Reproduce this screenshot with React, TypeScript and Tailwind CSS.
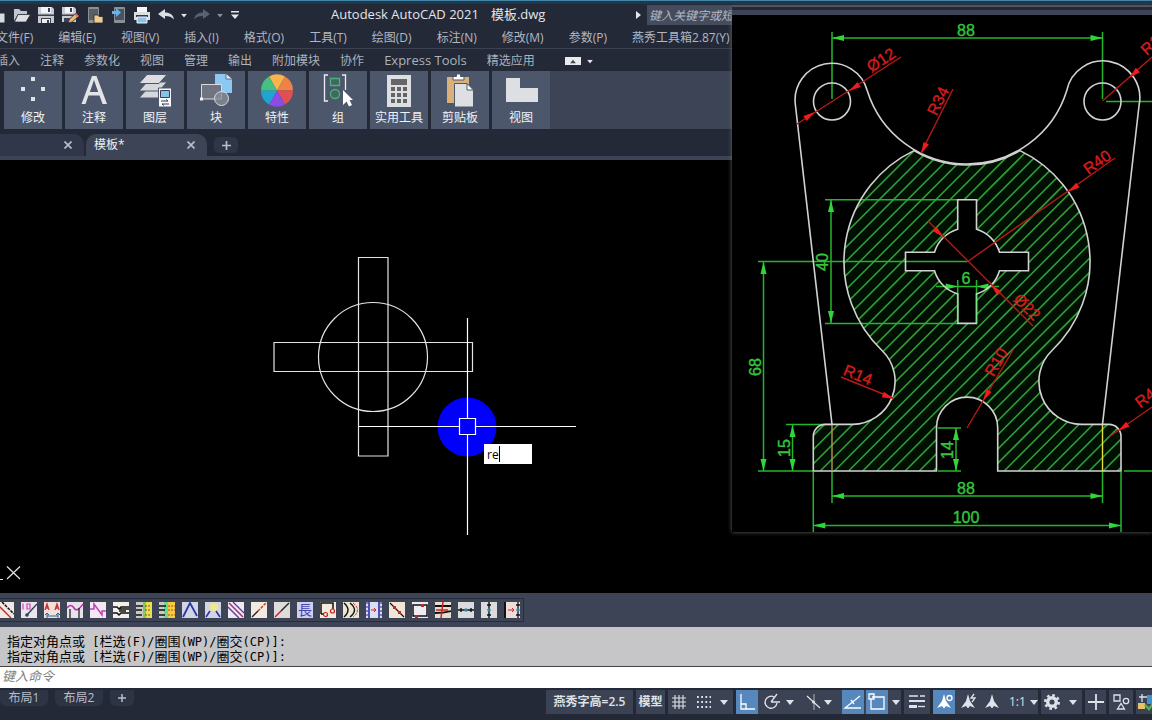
import React, { useState } from "react";

const FONT = "font-['Open_Sans','Noto_Sans_CJK_SC',sans-serif]";

const menus = [
    "文件(F)",
    "编辑(E)",
    "视图(V)",
    "插入(I)",
    "格式(O)",
    "工具(T)",
    "绘图(D)",
    "标注(N)",
    "修改(M)",
    "参数(P)",
    "燕秀工具箱2.87(Y)",
];

const ribbonTabs = [
    "插入",
    "注释",
    "参数化",
    "视图",
    "管理",
    "输出",
    "附加模块",
    "协作",
    "Express Tools",
    "精选应用",
];

const Caret = ({ className = "" }) => (
    <svg viewBox="0 0 8 5" className={`h-[5px] w-2 shrink-0 ${className}`} fill="currentColor">
        <path d="M0 0h8L4 5z" />
    </svg>
);

/* quick access icons, 18x18 */
const quickIcons = [
    {
        label: "新建",
        art: <path d="M1 2h9l6 5v10H1zM10 2v5h6" fill="#d9dbe0" stroke="#222836" />,
    },
    {
        label: "打开",
        art: (
            <>
                <path d="M1 15V3h5l2 2h6v3H5z" fill="#c4c6cb" />
                <path d="M5 8.500h12.500L13 16H1.500z" fill="#dedfe3" stroke="#222836" strokeWidth=".7" />
            </>
        ),
    },
    {
        label: "保存",
        art: (
            <>
                <path d="M1 1h14l2 2v14H1z" fill="#c9cbd0" />
                <path d="M4 1h10v6H4z" fill="#f3f4f6" />
                <path d="M11 2h2v4h-2zM1 8.500h16v1.500H1zM4 12h10v5H4z" fill="#3a4151" />
                <path d="M5 13h8v4H5z" fill="#eceef1" />
                <path d="M10 14h2v3h-2z" fill="#3a4151" />
            </>
        ),
    },
    {
        label: "另存为",
        art: (
            <>
                <path d="M1 1h12l2 2v13H1z" fill="#c9cbd0" />
                <path d="M4 1h8v6H4z" fill="#f3f4f6" />
                <path d="M9 2h2v4H9zM1 8.500h13v1.500H1zM3 12h7v4H3z" fill="#3a4151" />
                <path d="M15 7l3 3-7 6-4 1 1.500-4z" fill="#e8b873" stroke="#222836" strokeWidth=".8" />
                <path d="M15 7l3 3-1.500 1.500-3-3z" fill="#d66" />
            </>
        ),
    },
    {
        label: "从移动设备打开",
        art: (
            <>
                <rect x="3" y="1" width="11" height="16" rx="1" fill="#8d8f94" />
                <path d="M4 3h9v11H4z" fill="#5b5e65" />
                <path d="M9 17V9h4l1 1.500h4v6.500z" fill="#f0cd8c" stroke="#222836" strokeWidth=".8" />
            </>
        ),
    },
    {
        label: "保存到移动设备",
        art: (
            <>
                <rect x="5" y="1" width="11" height="16" rx="1" fill="#8d8f94" />
                <path d="M6 3h9v11H6z" fill="#4b515f" />
                <path d="M3 5h4V2l5 4.500L7 11V8H3z" fill="#62b5e8" />
            </>
        ),
    },
    {
        label: "打印",
        art: (
            <>
                <path d="M4 1h10v5H4z" fill="#f4f5f7" />
                <path d="M1 6h16v8H1z" fill="#dcdee2" />
                <path d="M3 9h12v2H3z" fill="#303746" />
                <path d="M4 11h10v6H4z" fill="#8cc4e8" stroke="#eef" />
            </>
        ),
    },
];

const ribbonPanels = [
    {
        label: "修改",
        art: (
            <path
                d="M16 4h4v4h-4zM6 14h4v4H6zM26 14h4v4h-4zM16 24h4v4h-4z"
                fill="#dfe3ea"
            />
        ),
    },
    {
        label: "注释",
        art: (
            <path
                fillRule="evenodd"
                d="M5.500 31L16 3h4.500L31 31h-4.500l-3-8.500h-11L9.500 31zM13.800 19h8.400L18 7z"
                fill="#e2e4e8"
            />
        ),
    },
    {
        label: "图层",
        art: (
            <>
                <path d="M10 16h20l-8 9H2z" fill="#d5d7dc" stroke="#4d576c" />
                <path d="M10 9h20l-8 9H2z" fill="#d5d7dc" stroke="#4d576c" />
                <path d="M10 1.500h20l-8 9H2z" fill="#dcdee2" stroke="#4d576c" />
                <path d="M21.500 15h13v19h-13z" fill="#f7f8fa" stroke="#4d576c" />
                <path d="M23.500 17.500h9v7h-9z" fill="#86c3ec" stroke="#364052" />
                <path d="M24 28h7m-2-1.500l2 1.500M32 31h-7m2 1.500L25 31" stroke="#364052" fill="none" />
            </>
        ),
    },
    {
        label: "块",
        art: (
            <>
                <path d="M17 1h11l6 5v14H17z" fill="#8cc8f2" />
                <path d="M28 1v5h6" fill="#d7ecfb" stroke="#4d576c" strokeWidth=".8" />
                <path d="M3.500 11.500h20V26h-20z" fill="#6f7480" stroke="#d8dbe0" />
                <circle cx="23.500" cy="25.500" r="7" fill="#8b8f98" fillOpacity=".75" stroke="#d8dbe0" />
                <path d="M2 24.500h3v3H2z" fill="#f2f3f5" />
            </>
        ),
    },
    {
        label: "特性",
        art: (
            <>
                <path d="M18 17.500L10 3.600A16 16 0 0 1 26 3.600z" fill="#f9b44c" />
                <path d="M18 17.500L26 3.600A16 16 0 0 1 34 17.500z" fill="#ee8247" />
                <path d="M18 17.500h16A16 16 0 0 1 26 31.400z" fill="#e14f50" />
                <path d="M18 17.500l8 13.900A16 16 0 0 1 10 31.400z" fill="#8b4be6" />
                <path d="M18 17.500l-8 13.900A16 16 0 0 1 2 17.500z" fill="#1fa5d3" />
                <path d="M18 17.500H2A16 16 0 0 1 10 3.600z" fill="#43c082" />
            </>
        ),
    },
    {
        label: "组",
        art: (
            <>
                <path d="M8 2H4.500v26H8M22 2h3.500v15" fill="none" stroke="#eceef2" strokeWidth="1.300" />
                <path d="M10.500 5.500h9v7h-9z" fill="#3d6a5d" stroke="#4fae7d" strokeWidth="1.300" />
                <circle cx="15" cy="21" r="4.500" fill="#3d6a5d" stroke="#4fae7d" strokeWidth="1.300" />
                <path d="M23 17v15l3.500-3.500 2.500 5 3-1.500-2.500-5H33z" fill="#fff" />
            </>
        ),
    },
    {
        label: "实用工具",
        art: (
            <>
                <path d="M6 2h24v32H6z" fill="#dedfe3" />
                <path d="M10 6h16v6H10z" fill="#666" />
                <path
                    d="M10 14h4v4h-4zM16 14h4v4h-4zM22 14h4v4h-4zM10 20h4v4h-4zM16 20h4v4h-4zM22 20h4v4h-4zM10 26h4v4h-4zM16 26h4v4h-4zM22 26h4v4h-4z"
                    fill="#626468"
                />
            </>
        ),
    },
    {
        label: "剪贴板",
        art: (
            <>
                <path d="M5 4h22v26H5z" fill="#d8b07a" />
                <path d="M11 7V3.500h3.500V1h4v2.500H22V7z" fill="#fff" stroke="#4d576c" />
                <path d="M12.500 10.500H25l6.500 6.500v17h-19z" fill="#dedfe3" stroke="#4d576c" />
                <path d="M25 10.500V17h6.500z" fill="#fff" stroke="#4d576c" />
            </>
        ),
    },
    {
        label: "视图",
        art: <path d="M3 5h14v10h18v14H3z" fill="#dedfe3" />,
    },
];

/* plugin toolbar, 16x16 each */
const toolIcons = [
    { bg: "#f1e9e2", art: <><path d="M1 4l12 12" stroke="#c22" strokeWidth="1.300" /><path d="M4 0l12 12" stroke="#111" strokeDasharray="3 1" strokeWidth="1.500" /></> },
    { bg: "#e9e4ee", art: <><path d="M2 1.500v6M6 2h3v5H6z" stroke="#d346b4" strokeWidth="1.200" /><path d="M16 2L5 14" stroke="#345" strokeWidth="1.500" /><circle cx="6" cy="13" r="1.800" fill="#345" /></> },
    { bg: "#f3e0dc", art: <><path d="M1 8l2-6 2 6M2 6h2M11 8l2-6 2 6M12 6h2" stroke="#c33" strokeWidth="1.300" /><path d="M3 16v-5m11 5v-5M3 14h11M1 13l2-2 2 2m7 0l2-2 2 2" stroke="#268" /></> },
    { bg: "#e8e2ea", art: <><path d="M0 6q4-5 7 0t9-4" stroke="#c02bb0" strokeWidth="1.500" /><path d="M3 16V7m9 9V6" stroke="#222" strokeWidth="1.300" /></> },
    { bg: "#f4e9f2", art: <path d="M0 7h4V2l8 11V9h4" stroke="#c040b8" strokeWidth="1.500" /> },
    { bg: "#f2f0e9", art: <path d="M0 5h4l2 2 2-2h8M0 11h4l2 2 2-2h8M6 7h10M6 9h7" stroke="#111" strokeWidth="1.500" /> },
    { bg: "#e7e04f", art: <><path d="M0 0h7v16H0z" fill="#c9c9c4" stroke="none" /><path d="M7 0h3v16H7z" fill="#7cc95e" stroke="none" /><path d="M0 4h7M0 8h6M0 13h6" stroke="#111" strokeWidth="1.500" /><path d="M9 4h6M9 8h6M9 13h6" stroke="#a42" strokeDasharray="2 1" /></> },
    { bg: "#f3cf3e", art: <><path d="M0 0h5v16H0z" fill="#c9c9c4" stroke="none" /><path d="M5 0h4v16H5z" fill="#6fd39c" stroke="none" /><path d="M0 4h7M0 8h6M0 13h6" stroke="#111" strokeWidth="1.500" /><path d="M9 4h7M9 8h7M9 13h7" stroke="#b42" strokeDasharray="2 1" /></> },
    { bg: "#d2d6e2", art: <path d="M1 15L8 1l7 13" stroke="#2b35b0" strokeWidth="1.800" /> },
    { bg: "#d2d6e2", art: <><circle cx="9" cy="5" r="4" fill="#efe88a" stroke="none" /><path d="M1 15l4-6m6 0l4 6" stroke="#2b35b0" strokeWidth="1.600" /></> },
    { bg: "#efe9f0", art: <><path d="M0 5l11 11M5 0l11 11" stroke="#5a3fa8" strokeWidth="1.400" /><path d="M1 1l14 14" stroke="#b0306f" strokeWidth="1.600" /></> },
    { bg: "#f3ebe2", art: <><path d="M1 15L7 9" stroke="#222" strokeWidth="1.500" /><path d="M7 9l8-8" stroke="#c53a22" strokeWidth="1.400" strokeDasharray="3 1" /></> },
    { bg: "#dedcdb", art: <><path d="M7 9l8-8" stroke="#222" strokeWidth="1.500" /><path d="M1 15L7 9" stroke="#b22" strokeWidth="1.500" /></> },
    { bg: "#cfd0ef", art: null, glyph: "長" },
    { bg: "#f3ebdd", art: <><path d="M1 12V1h12v6M1 12h3" stroke="#111" strokeWidth="1.500" /><circle cx="5.500" cy="12.500" r="2" stroke="#c22" strokeWidth="1.200" /><circle cx="12.500" cy="9" r="2" stroke="#c22" strokeWidth="1.200" /></> },
    { bg: "#ece6d4", art: <><path d="M1 1q8 7 0 14M7 1q9 7 0 14" stroke="#111" strokeWidth="1.400" /><path d="M10 1q9 7 0 14" stroke="#b33" strokeDasharray="3 1" /></> },
    { bg: "#dcdcf3", art: <><path d="M3 0v16M13 0v16" stroke="#1e23a0" strokeWidth="1.500" /><path d="M1 0v16M15 0v16" stroke="#1e23a0" strokeDasharray="2 2" /><path d="M5 8h5M8 6l2 2-2 2" stroke="#c22" /></> },
    { bg: "#f1e6d6", art: <><path d="M1 1l14 14" stroke="#111" strokeWidth="1.300" /><path d="M4 4h3v3H4zM9 9h3v3H9z" fill="#c22" stroke="none" /></> },
    { bg: "#ececf2", art: <><path d="M1 3h14v11H1z" stroke="#111" strokeWidth="1.500" /><path d="M9 2h3v3H9zM3 13h3v3H3z" fill="#c22" stroke="none" /></> },
    { bg: "#e3dccf", art: <><path d="M0 4h16M0 11q8 0 16-2" stroke="#111" strokeWidth="1.800" /><path d="M8 0L6 16M1 8h12" stroke="#c22" strokeWidth="1.500" /></> },
    { bg: "#d9dbdd", art: <><path d="M0 8h16M3 6v4M13 6v4" stroke="#111" strokeWidth="1.400" /><circle cx="8" cy="8" r="1.800" fill="#38a" stroke="none" /></> },
    { bg: "#d9dbdd", art: <><path d="M8 0v16M6 3h4M6 13h4" stroke="#111" strokeWidth="1.400" /><circle cx="8" cy="8" r="1.800" fill="#38a" stroke="none" /></> },
    { bg: "#ecdcda", art: <><path d="M1 0v16" stroke="#111" strokeWidth="2" /><path d="M14 0v16M12 3h4M12 13h4" stroke="#111" strokeWidth="1.300" /><path d="M4 8h6M8 6l2 2-2 2" stroke="#c22" /><circle cx="14" cy="8" r="1.800" fill="#38a" stroke="none" /></> },
];

/* ---------- part drawing ---------- */

const BODY =
    "M914 150.600A104.500 104.500 0 0 0 1020 150.600A123 123 0 0 1 1052 350.500A43 43 0 0 0 1081.500 424.400H1109A12 12 0 0 1 1121 436.400V471H997.700V427.700A30.600 30.600 0 0 0 936.500 427.700V471H813.300V436.400A12 12 0 0 1 825.300 424.400H852.500A43 43 0 0 0 882 350.500A123 123 0 0 1 914 150.600Z";
const HOLE =
    "M957.700 229.200V199.700H976.500V229.200A34 34 0 0 1 999.500 252.300H1028.500V270.700H999.500A34 34 0 0 1 976.500 293.900V323.400H957.700V293.900A34 34 0 0 1 934.500 270.700H905.500V252.300H934.500A34 34 0 0 1 957.700 229.200Z";

const Tip = ({ x, y, a }) => (
    <path d="M0 0L-12 -3V3Z" transform={`translate(${x} ${y}) rotate(${a})`} stroke="none" />
);

const Dim = ({ x, y, a = 0, anchor = "middle", children }) => (
    <text
        transform={`translate(${x} ${y}) rotate(${a})`}
        textAnchor={anchor as any}
        dominantBaseline="central"
        fontSize="16"
        strokeWidth=".4"
    >
        {children}
    </text>
);

const PartDrawing = () => {
    const hatch = Array.from({ length: 54 }, (_, i) => 965.75 + i * 14.15);
    return (
        <svg
            viewBox="732 15 420 517"
            className="block h-[517px] w-[420px] bg-black font-['Liberation_Sans',sans-serif]"
            fill="none"
        >
            <clipPath id="body">
                <path clipRule="evenodd" d={BODY + HOLE} />
            </clipPath>
            <g clipPath="url(#body)" stroke="#2f9c38" strokeWidth="1.600">
                <path d="M732 15h420v517H732z" fill="#000f02" stroke="none" />
                {hatch.map((s) => (
                    <path key={s} d={`M${s - 471} 471L${s - 140} 140`} />
                ))}
            </g>

            <g stroke="#22b62c" strokeWidth="1.500">
                <path d="M832 38H1102.500M832 32V99M1102.500 32V99M1106 101.500H1152" />
                <path d="M831 200V323M825 199.700H957M825 323.400H957" />
                <path d="M763.500 262V471M758 261.500H967M758 471H813M1124 471H1152" />
                <path d="M792.500 425V471M786 424.400H832" />
                <path d="M956 428V471M938 428H961M938 471H961" />
                <path d="M832 496H1102.500M832 471V503M1102.500 471V503" />
                <path d="M813.300 525.500H1121M813.300 472V532M1121 472V532" />
                <path d="M936 286.500H999M957.700 280V323M976.500 280V323" />
            </g>
            <g fill="#2fd83a">
                <Tip x={832} y={38} a={180} />
                <Tip x={1102.5} y={38} a={0} />
                <Tip x={831} y={200} a={-90} />
                <Tip x={831} y={323} a={90} />
                <Tip x={763.5} y={262} a={-90} />
                <Tip x={763.5} y={471} a={90} />
                <Tip x={792.5} y={425} a={-90} />
                <Tip x={792.5} y={471} a={90} />
                <Tip x={956} y={428} a={-90} />
                <Tip x={956} y={471} a={90} />
                <Tip x={832} y={496} a={180} />
                <Tip x={1102.5} y={496} a={0} />
                <Tip x={813.3} y={525.5} a={180} />
                <Tip x={1121} y={525.5} a={0} />
                <Tip x={957.7} y={286.5} a={0} />
                <Tip x={976.5} y={286.5} a={180} />
            </g>
            <g fill="#35c43e" stroke="#35c43e">
                <Dim x={966} y={30}>88</Dim>
                <Dim x={822} y={262} a={-90}>40</Dim>
                <Dim x={755} y={367} a={-90}>68</Dim>
                <Dim x={784} y={448} a={-90}>15</Dim>
                <Dim x={947} y={450} a={-90}>14</Dim>
                <Dim x={966} y={278}>6</Dim>
                <Dim x={966} y={488}>88</Dim>
                <Dim x={966} y={517}>100</Dim>
            </g>

            <g stroke="#d2d2d2" strokeWidth="1.600">
                <path d={BODY} />
                <path d={HOLE} />
                <path d="M832 424.400L795.400 105A36.700 36.700 0 0 1 867.200 90.500A104.500 104.500 0 0 0 1066.800 90.500A36.700 36.700 0 0 1 1139.100 105L1102.500 424.400" />
                <circle cx="832" cy="101.500" r="18.500" />
                <circle cx="1102.500" cy="101.500" r="18.500" />
            </g>
            <path d="M957.700 295V323M976.500 295V323" stroke="#7fe07f" />
            <path d="M832 425V471" stroke="#b59a4a" strokeWidth="1.400" />
            <path d="M1102.500 425V471" stroke="#e2e03a" strokeWidth="1.400" />

            <g stroke="#b81818" strokeWidth="1.400">
                <path d="M797 124L901 57M953 89L921 153M967 262L1115 158M928 221L1033 326" />
                <path d="M967 428L1013 350M841 377L893 398M1109 437L1152 407M1102.500 101L1152 57" />
            </g>
            <g fill="#f01c1c">
                <Tip x={849} y={91} a={147} />
                <Tip x={815} y={112} a={-33} />
                <Tip x={921} y={154} a={116} />
                <Tip x={1068} y={192} a={145} />
                <Tip x={943} y={237} a={45} />
                <Tip x={991} y={285} a={225} />
                <Tip x={983} y={401} a={120} />
                <Tip x={894} y={399} a={22} />
                <Tip x={1118} y={431} a={145} />
                <Tip x={1129} y={78} a={138} />
            </g>
            <g fill="#d41c1c" stroke="#d41c1c">
                <Dim x={881} y={60} a={-33}>Ø12</Dim>
                <Dim x={938} y={101} a={-64}>R34</Dim>
                <Dim x={1097} y={162} a={-35}>R40</Dim>
                <Dim x={1027} y={307} a={45}>Ø22</Dim>
                <Dim x={996} y={362} a={-60}>R10</Dim>
                <Dim x={858} y={375} a={22}>R14</Dim>
                <Dim x={1137} y={404} a={-37} anchor="start">R4</Dim>
                <Dim x={1143} y={52} a={-42} anchor="start">R12</Dim>
            </g>
        </svg>
    );
};

/* ---------- chrome ---------- */

const TitleBar = () => (
    <header className="flex h-[24px] items-center overflow-hidden pb-[2px] text-[13px] text-[#e3e5ea]">
        <div className="-ml-[11px] flex items-center gap-[6px]">
            {quickIcons.map((q) => (
                <button key={q.label} aria-label={q.label} className="size-[18px]">
                    <svg viewBox="0 0 18 18" className="size-[18px]">
                        {q.art}
                    </svg>
                </button>
            ))}
        </div>
        <div className="ml-[6px] flex items-center">
            <button aria-label="放弃" className="size-[18px]">
                <svg viewBox="0 0 18 18" fill="#dcdee3">
                    <path d="M1 8l7-5v3.500c5 0 8 2 9 7-2-2.500-5-3.500-9-3.500v3z" />
                </svg>
            </button>
            <Caret className="ml-[5px] scale-75" />
            <button aria-label="重做" className="ml-[5px] size-[18px]">
                <svg viewBox="0 0 18 18" fill="#5b616f">
                    <path d="M17 8l-7-5v3.500c-5 0-8 2-9 7 2-2.500 5-3.500 9-3.500v3z" />
                </svg>
            </button>
            <Caret className="ml-[5px] scale-75 text-[#8b909c]" />
            <button aria-label="自定义快速访问工具栏" className="ml-[7px]">
                <svg viewBox="0 0 8 8" className="size-2" fill="currentColor">
                    <path d="M0 0h8v1.500H0zM0 3.500h8L4 8z" />
                </svg>
            </button>
        </div>
        <h1 className="ml-[92px] flex gap-3 whitespace-nowrap">
            <span>Autodesk AutoCAD 2021</span>
            <span>模板.dwg</span>
        </h1>
        <svg viewBox="0 0 5 8" className="ml-auto h-2 w-[5px]" fill="currentColor">
            <path d="M0 0l5 4-5 4z" />
        </svg>
        <input
            aria-label="搜索"
            placeholder="键入关键字或短语"
            className="ml-[6px] h-5 w-[505px] bg-[#454c5e] px-[2px] text-xs italic outline-none placeholder:text-[#b4b9c4]"
        />
    </header>
);

const MenuBar = () => (
    <nav className="flex h-[21px] items-center gap-[25px] overflow-hidden border-b border-[#3b4150] text-xs whitespace-nowrap text-[#b3b7c0]">
        {menus.map((m, i) => (
            <a key={m} href="#" className={i === 0 ? "-ml-1" : ""}>
                {m}
            </a>
        ))}
    </nav>
);

const RibbonTabs = () => (
    <nav className="flex h-[22px] items-center gap-5 overflow-hidden pt-[2px] text-xs whitespace-nowrap text-[#adb2bc]">
        {ribbonTabs.map((t, i) => (
            <a key={t} href="#" className={i === 0 ? "-ml-1" : t === "Express Tools" ? "text-[13px]" : ""}>
                {t}
            </a>
        ))}
        <div className="ml-[10px] flex items-center gap-[5px] text-[#e3e5ea]">
            <button aria-label="最小化面板" className="flex h-2 w-4 items-center justify-center bg-[#e8eaee] text-[#444]">
                <Caret className="rotate-180 scale-75" />
            </button>
            <Caret className="scale-75" />
        </div>
    </nav>
);

const Ribbon = () => (
    <section className="flex h-[58px] bg-[#3d4455]">
        <div className="flex gap-[3px] bg-[#232937] pl-1">
            {ribbonPanels.map((p) => (
                <button
                    key={p.label}
                    className="flex w-[58px] flex-col items-center bg-[#4d576c] pt-[2px] text-xs text-[#f0f2f5]"
                >
                    <svg viewBox="0 0 36 36" className="size-9">
                        {p.art}
                    </svg>
                    <span className="leading-[18px] whitespace-nowrap">{p.label}</span>
                </button>
            ))}
        </div>
    </section>
);

const Close = () => (
    <svg viewBox="0 0 8 8" className="size-2" stroke="#b9bdc6" strokeWidth="1.700">
        <path d="M.5.5l7 7M7.500.5l-7 7" />
    </svg>
);

const FileTabs = () => (
    <div className="flex h-[31px] items-end border-b-4 border-[#3d4455] bg-[#232937] text-xs text-[#eceef2]">
        <div className="flex h-[22px] w-[84px] items-center justify-end rounded-tr-[10px] bg-[#30374a] pr-3">
            <button aria-label="关闭"><Close /></button>
        </div>
        <div className="ml-[2px] flex h-[22px] w-[121px] items-center justify-between rounded-t-[10px] bg-[#3d4455] pr-3 pl-2">
            <span>模板*</span>
            <button aria-label="关闭 模板"><Close /></button>
        </div>
        <button
            aria-label="新图形"
            className="mb-[3px] ml-[7px] flex h-4 w-6 items-center justify-center rounded-[5px] bg-[#2f3646]"
        >
            <svg viewBox="0 0 8 8" className="size-[9px]" stroke="#b9bdc6" strokeWidth="1.500">
                <path d="M4 0v8M0 4h8" />
            </svg>
        </button>
    </div>
);

const ModelSpace = () => {
    const [cmd, setCmd] = useState("re");
    return (
        <main className="relative min-h-[433px] flex-1 overflow-hidden bg-black">
            <svg
                viewBox="0 160 732 433"
                className="block h-[433px] w-[732px]"
                fill="none"
                stroke="#e4e4e4"
                strokeWidth="1.200"
            >
                <circle cx="467" cy="427" r="29.500" fill="#0000fb" stroke="none" />
                <path d="M358.500 257.500H388V456H358.500zM274 342.500H472.500V371.500H274z" />
                <circle cx="373" cy="357" r="54.500" />
                <path d="M358.500 426.500H459M475.500 426.500H576M467.500 318V418.500M467.500 434.500V535" stroke="#fff" />
                <path d="M459.500 418.500H475.500V434.500H459.500z" stroke="#fff" />
                <path d="M7 566.500L20 579M20 566.500L7 579M0 579.500H3" />
            </svg>
            <div className="absolute top-[284px] left-[484px] flex h-5 w-12 items-center bg-white">
                <input
                    aria-label="动态输入"
                    value={cmd}
                    onChange={(e: any) => setCmd(e.target.value)}
                    className="h-5 w-full bg-transparent pl-[3px] text-xs text-black outline-none"
                />
                <span className="absolute left-[15px] h-4 w-px bg-black" />
            </div>
        </main>
    );
};

const PluginToolbar = () => (
    <div className="flex h-[34px] items-center bg-[#3d4455]">
        <div className="-ml-[3px] flex h-6 items-center gap-[7px] border border-[#262c3a] pr-[3px]">
            {toolIcons.map((t, i) => (
                <button key={i} aria-label={`工具 ${i + 1}`} className="size-4">
                    <svg viewBox="0 0 16 16" className="size-4" fill="none">
                        <path d="M0 0h16v16H0z" fill={t.bg} />
                        {t.art}
                        {t.glyph && (
                            <text x="8" y="13" fontSize="14" textAnchor="middle" fill="#4347ad">
                                {t.glyph}
                            </text>
                        )}
                    </svg>
                </button>
            ))}
        </div>
    </div>
);

const history = ["指定对角点或 [栏选(F)/圈围(WP)/圈交(CP)]:", "指定对角点或 [栏选(F)/圈围(WP)/圈交(CP)]:"];

const CommandLine = () => (
    <section>
        <div className="h-10 border-b border-[#444] bg-[#c6c6c8] pt-[7px] pl-[7px] font-['DejaVu_Sans_Mono','Noto_Sans_CJK_SC',monospace] text-xs text-black">
            {history.map((line, i) => (
                <p key={i} className="h-[15px] leading-[15px] whitespace-pre">
                    {line.split(/([\u4e00-\u9fff]+)/).map((run, j) => (
                        <span key={j} className={j % 2 ? "text-[13px]" : ""}>
                            {run}
                        </span>
                    ))}
                </p>
            ))}
        </div>
        <input
            aria-label="命令"
            placeholder="键入命令"
            className="block h-[21px] w-full bg-white px-[2px] pb-1 text-[13px] italic outline-none placeholder:text-[#808080]"
        />
    </section>
);

const Cell = ({ on = false, w = "w-[22px]", label, children }: any) => (
    <button
        aria-label={label}
        className={`flex h-6 shrink-0 items-center justify-center ${w} ${on ? "bg-[#5687bd] text-white" : ""}`}
    >
        <svg viewBox="0 0 20 20" className="size-5" fill="none" stroke="currentColor" strokeWidth="1.300">
            {children}
        </svg>
    </button>
);

const Group = ({ w, children }: any) => (
    <div className={`flex h-6 shrink-0 items-center overflow-hidden bg-[#3b4253] ${w}`}>{children}</div>
);

const needle = "M10 2l2 7 5 7-5-2-2 2.500-2-2.500L3 16l5-7z";

const StatusBar = () => (
    <footer className="flex h-8 items-start justify-between overflow-hidden bg-[#232937] pt-[2px] text-xs text-[#dfe2e8]">
        <div className="flex items-center text-[#b9bec8]">
            <button className="h-4 w-12 rounded-b-md bg-[#2d3444] leading-[16px]">布局1</button>
            <button className="ml-[7px] h-4 w-12 rounded-b-md bg-[#2d3444] leading-[16px]">布局2</button>
            <button aria-label="新建布局" className="ml-[7px] flex h-4 w-6 items-center justify-center rounded-b-md bg-[#2d3444]">
                <svg viewBox="0 0 8 8" className="size-2" stroke="currentColor" strokeWidth="1.500">
                    <path d="M4 0v8M0 4h8" />
                </svg>
            </button>
        </div>
        <div className="flex shrink-0 gap-[3px]">
            <Group w="w-[87px]">
                <button className="w-full font-semibold whitespace-nowrap">燕秀字高=2.5</button>
            </Group>
            <Group w="w-[29px]">
                <button className="w-full font-semibold whitespace-nowrap">模型</button>
            </Group>
            <Group w="w-[65px]">
                <Cell label="栅格"><path d="M6 3v14M10 3v14M14 3v14M3 6h14M3 10h14M3 14h14" strokeWidth="1.100" /></Cell>
                <Cell label="捕捉" w="w-[26px]">
                    <path d="M4 5h14M4 10h14M4 15h14" strokeWidth="1.800" strokeDasharray="1.800 2.400" />
                </Cell>
                <Caret className="ml-1" />
            </Group>
            <Group w="w-[165px]">
                <Cell label="正交" on><path d="M4 2v15h14M4 12h5v5" /></Cell>
                <Cell label="极轴" w="w-[28px]"><path d="M15 11a6 6 0 1 1-3-6M9 10h9M9 10l6-8" /></Cell>
                <Caret className="mr-2" />
                <Cell label="等轴测">
                    <path d="M11 2v16" stroke="#999" />
                    <path d="M4 4l13 12" />
                    <circle cx="10.500" cy="10" r="1.500" fill="currentColor" stroke="none" />
                </Cell>
                <Caret className="mr-[10px]" />
                <Cell label="对象捕捉追踪" on><path d="M18 16H2L17 4M8 8l3 4" /></Cell>
                <span className="w-[2px]" />
                <Cell label="对象捕捉" on><path d="M5 5h12v12H4V7M2 2h5v5H2z" /></Cell>
                <Caret className="ml-1" />
            </Group>
            <Group w="w-[26px]">
                <Cell label="线宽" w="w-full">
                    <path d="M2 4h9m2 0h5" />
                    <path d="M2 9h16" strokeWidth="2" />
                    <path d="M2 14.500h8" strokeWidth="3" />
                    <path d="M11 14.500h7" />
                </Cell>
            </Group>
            <Group w="w-[105px]">
                <Cell label="注释可见性" on>
                    <path d={needle} fill="currentColor" stroke="none" />
                    <circle cx="15.500" cy="6" r="2.500" />
                </Cell>
                <Cell label="自动缩放" w="w-[26px]">
                    <path d={needle} fill="currentColor" stroke="none" />
                    <path d="M16 2l-3 4h4l-3 4" />
                </Cell>
                <Cell label="注释比例"><path d={needle} fill="currentColor" stroke="none" /></Cell>
                <button className="ml-[6px] flex items-center gap-1 text-[#dfe2e8]">
                    1:1 <Caret />
                </button>
            </Group>
            <Group w="w-[41px]">
                <Cell label="切换工作空间">
                    <circle cx="10" cy="10" r="4.300" strokeWidth="3.400" />
                    <circle cx="10" cy="10" r="6.800" strokeWidth="2.400" strokeDasharray="2.670 2.670" />
                </Cell>
                <Caret className="ml-[6px]" />
            </Group>
            <Group w="w-[21px]">
                <Cell label="注释监视器" w="w-full"><path d="M10 2v16M2 10h16" strokeWidth="1.800" /></Cell>
            </Group>
            <Group w="w-6">
                <Cell label="隔离对象" w="w-full">
                    <path d="M3 3h6v6H3zM6.500 17h7L10 11.500z" />
                    <circle cx="15" cy="9" r="2.700" />
                </Cell>
            </Group>
            <Group w="w-4">
                <Cell label="图形性能">
                    <path d="M1 11h7v6H1z" fill="#e8c069" stroke="none" />
                    <path d="M10 3h9v9h-9z" fill="#3d8fd1" stroke="none" />
                    <path d="M5 2v8M2 5h8" />
                    <path d="M8 13l4 4 6-8" stroke="#4fb04f" strokeWidth="2.500" />
                </Cell>
            </Group>
        </div>
    </footer>
);

const App = () => {
    return (
        <div className={`relative flex min-h-screen flex-col overflow-hidden bg-[#232937] ${FONT}`}>
            <div className="h-1 border-t border-[#4785a8] bg-[#1a3a50]" />
            <TitleBar />
            <MenuBar />
            <RibbonTabs />
            <Ribbon />
            <FileTabs />
            <ModelSpace />
            <PluginToolbar />
            <CommandLine />
            <StatusBar />

            <aside className="absolute top-[7px] right-0 shadow-[0_0_4px_#6b6b70]">
                <div className="h-2 border-t-[3px] border-[#232937] bg-[#3f4556]" />
                <PartDrawing />
            </aside>
        </div>
    );
};

export default App;
